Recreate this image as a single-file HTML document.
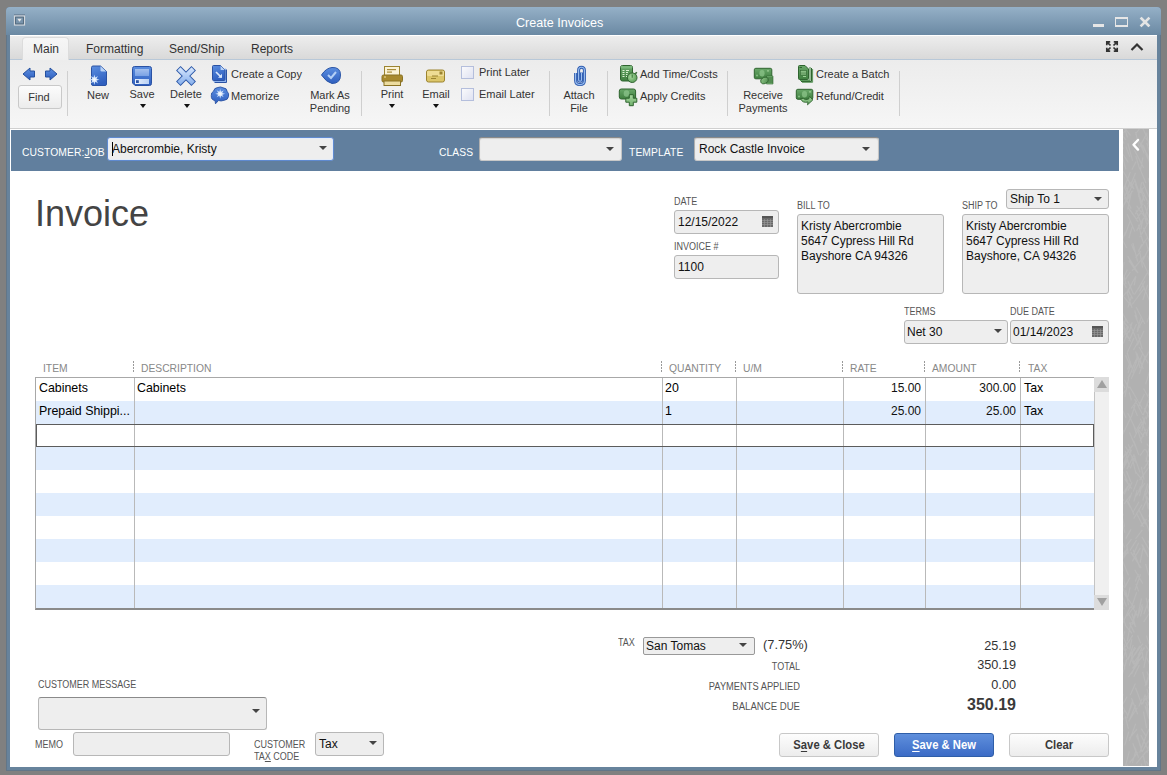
<!DOCTYPE html>
<html><head><meta charset="utf-8">
<style>
*{box-sizing:border-box;margin:0;padding:0}
html,body{width:1167px;height:775px;overflow:hidden;background:#808080;font-family:"Liberation Sans",sans-serif;color:#333}
.a{position:absolute}
#win{position:absolute;left:6px;top:7px;width:1155px;height:764px;background:#67839c;border-radius:4px 4px 0 0;box-shadow:inset 1px 0 0 #627688,inset -1px 0 0 #627688,inset 0 -1px 0 #627688}
#title{position:absolute;left:6px;top:7px;width:1155px;height:28px;border-radius:4px 4px 0 0;background:linear-gradient(#95b0c7,#6b89a3)}
#content{position:absolute;left:10px;top:35px;width:1147px;height:732px;background:#fff}
.t{position:absolute;white-space:nowrap;line-height:1}
.tab{font-size:12px;color:#333}
#tabbar{position:absolute;left:10px;top:35px;width:1147px;height:25px;background:linear-gradient(#ededed,#d9d9d9);border-top:1px solid #fff;border-bottom:1px solid #b8c8d8}
#toolbar{position:absolute;left:10px;top:60px;width:1147px;height:69px;background:linear-gradient(#ececec,#f6f6f6);border-bottom:1px solid #d0d0d0}
.tb{font-size:12px;color:#333}
.sep{position:absolute;width:1px;background:#cfcfcf}
.lbl{font-size:10px;color:#555;transform:scaleX(.9);transform-origin:0 0}
.lr{transform-origin:100% 0}
.fld{position:absolute;background:#eeeeee;border:1px solid #b7b7b7;border-radius:3px}
.v{font-size:12px;color:#111}
.c{font-size:12.4px;color:#000}
.dd{position:absolute;width:0;height:0;border-left:4px solid transparent;border-right:4px solid transparent;border-top:4px solid #444}
.hdr{font-size:10.3px;color:#888}
.hsep{position:absolute;width:1px;height:11px;background:repeating-linear-gradient(#9a9a9a 0 2px,transparent 2px 3px)}
</style></head><body>
<div id="win"></div>
<div id="title"></div>
<div id="content"></div>
<!-- title bar -->
<svg class="a" style="left:13px;top:14px" width="13" height="12"><rect x="1" y="0.5" width="11" height="1" fill="#5a6f82"/><rect x="1.5" y="2" width="10" height="9" fill="none" stroke="#d4d8dc" stroke-width="1.2"/><rect x="2.6" y="3.1" width="7.8" height="6.8" fill="#7893ab" stroke="#4d6274" stroke-width="0.8"/><path d="M4.3 4.8 L8.7 4.8 L6.5 7.8 Z" fill="#e8e8e8"/></svg>
<div class="t" style="left:516px;top:15.6px;font-size:13.5px;color:#fff;transform:scaleX(.93);transform-origin:0 0">Create Invoices</div>
<div class="a" style="left:1093px;top:24px;width:11px;height:3px;background:#e6e6e6"></div>
<div class="a" style="left:1115px;top:17px;width:13px;height:10px;border:2px solid #e6e6e6;border-left-width:1.5px;border-right-width:1.5px"></div>
<svg class="a" style="left:1139px;top:16px" width="12" height="12"><path d="M2.5 2.5 L9.5 9.5 M9.5 2.5 L2.5 9.5" stroke="#e4e4e4" stroke-width="2.6" stroke-linecap="square"/></svg>

<div id="tabbar"></div>
<div class="a" style="left:22px;top:37px;width:47px;height:23px;background:linear-gradient(#f6f6f6,#efefef);border:1px solid #dcdcdc;border-bottom:none;border-radius:4px 4px 0 0"></div>
<div class="t tab" style="left:33px;top:43px">Main</div>
<div class="t tab" style="left:86px;top:43px">Formatting</div>
<div class="t tab" style="left:169px;top:43px">Send/Ship</div>
<div class="t tab" style="left:251px;top:43px">Reports</div>

<div id="toolbar"></div>

<!-- customer bar -->
<div class="a" style="left:11px;top:130px;width:1108px;height:41px;background:#617f9e"></div>
<div class="t" style="left:22px;top:148px;font-size:10.3px;letter-spacing:.1px;color:#fff">CUSTOMER:<u style="text-decoration-thickness:1px;text-underline-offset:1px">J</u>OB</div>
<div class="fld" style="left:107px;top:137px;width:227px;height:24px;border:1px solid #5f8ad0;box-shadow:inset 0 0 0 1px #e4ecf8"></div>
<div class="a" style="left:112px;top:142px;width:1px;height:14px;background:#000"></div>
<div class="t v" style="left:112px;top:143px">Abercrombie, Kristy</div>
<div class="t" style="left:439px;top:148px;font-size:10.3px;letter-spacing:.1px;color:#fff">CLASS</div>
<div class="fld" style="left:479px;top:137px;width:143px;height:24px;border-color:#8a8a8a #c4c4c4 #c8c8c8 #b0b0b0;box-shadow:inset 0 1px 1px rgba(0,0,0,.12)"></div>
<div class="t" style="left:629px;top:148px;font-size:10.3px;letter-spacing:.1px;color:#fff">TEMPLATE</div>
<div class="fld" style="left:694px;top:137px;width:185px;height:24px;border-color:#8a8a8a #c4c4c4 #c8c8c8 #b0b0b0;box-shadow:inset 0 1px 1px rgba(0,0,0,.12)"></div>
<div class="t v" style="left:699px;top:143px">Rock Castle Invoice</div>

<div class="t" style="left:35px;top:196px;font-size:36px;color:#444">Invoice</div>

<!-- header fields -->
<div class="t lbl" style="left:674px;top:197px">DATE</div>
<div class="fld" style="left:674px;top:210px;width:105px;height:24px"></div>
<div class="t v" style="left:678px;top:216px">12/15/2022</div>
<svg class="a" style="left:762px;top:216px" width="11" height="11"><rect x="0" y="0" width="11" height="11" fill="#6a6a6a"/><rect x="0" y="0" width="11" height="2" fill="#555"/><path d="M0 4.5 H11 M0 6.5 H11 M0 8.5 H11 M2.5 3 V11 M5.5 3 V11 M8.5 3 V11" stroke="#9a9a9a" stroke-width="0.6"/></svg>
<div class="t lbl" style="left:674px;top:242px">INVOICE #</div>
<div class="fld" style="left:674px;top:255px;width:105px;height:24px"></div>
<div class="t v" style="left:678px;top:261px">1100</div>
<div class="t lbl" style="left:797px;top:201px">BILL TO</div>
<div class="fld" style="left:797px;top:214px;width:147px;height:80px"></div>
<div class="t v" style="left:801px;top:219px;line-height:15px">Kristy Abercrombie<br>5647 Cypress Hill Rd<br>Bayshore CA 94326</div>
<div class="t lbl" style="left:962px;top:201px">SHIP TO</div>
<div class="fld" style="left:1006px;top:189px;width:103px;height:20px"></div>
<div class="t v" style="left:1010px;top:193px">Ship To 1</div>
<div class="dd" style="left:1094px;top:197px"></div>
<div class="fld" style="left:962px;top:214px;width:147px;height:80px"></div>
<div class="t v" style="left:966px;top:219px;line-height:15px">Kristy Abercrombie<br>5647 Cypress Hill Rd<br>Bayshore, CA 94326</div>
<div class="t lbl" style="left:904px;top:307px">TERMS</div>
<div class="fld" style="left:904px;top:320px;width:104px;height:24px"></div>
<div class="t v" style="left:907px;top:326px">Net 30</div>
<div class="dd" style="left:994px;top:329px"></div>
<div class="t lbl" style="left:1010px;top:307px">DUE DATE</div>
<div class="fld" style="left:1010px;top:320px;width:99px;height:24px"></div>
<div class="t v" style="left:1013px;top:326px">01/14/2023</div>
<svg class="a" style="left:1092px;top:326px" width="11" height="11"><rect x="0" y="0" width="11" height="11" fill="#6a6a6a"/><rect x="0" y="0" width="11" height="2" fill="#555"/><path d="M0 4.5 H11 M0 6.5 H11 M0 8.5 H11 M2.5 3 V11 M5.5 3 V11 M8.5 3 V11" stroke="#9a9a9a" stroke-width="0.6"/></svg>
<!-- table -->
<div class="t hdr" style="left:43px;top:364px">ITEM</div><div class="t hdr" style="left:141px;top:364px">DESCRIPTION</div><div class="t hdr" style="left:669px;top:364px">QUANTITY</div><div class="t hdr" style="left:743px;top:364px">U/M</div><div class="t hdr" style="left:850px;top:364px">RATE</div><div class="t hdr" style="left:932px;top:364px">AMOUNT</div><div class="t hdr" style="left:1028px;top:364px">TAX</div>
<div class="hsep" style="left:133px;top:361px"></div><div class="hsep" style="left:661px;top:361px"></div><div class="hsep" style="left:735px;top:361px"></div><div class="hsep" style="left:842px;top:361px"></div><div class="hsep" style="left:924px;top:361px"></div><div class="hsep" style="left:1019px;top:361px"></div>
<div class="a" style="left:35px;top:377px;width:1060px;height:233px;border-top:1px solid #a8a8a8;border-left:1px solid #a8a8a8;border-bottom:2px solid #8a8a8a"></div>
<div class="a" style="left:36px;top:378px;width:1058px;height:23px;background:#ffffff"></div><div class="a" style="left:36px;top:401px;width:1058px;height:23px;background:#e1edfd"></div><div class="a" style="left:36px;top:424px;width:1058px;height:23px;background:#ffffff"></div><div class="a" style="left:36px;top:447px;width:1058px;height:23px;background:#e1edfd"></div><div class="a" style="left:36px;top:470px;width:1058px;height:23px;background:#ffffff"></div><div class="a" style="left:36px;top:493px;width:1058px;height:23px;background:#e1edfd"></div><div class="a" style="left:36px;top:516px;width:1058px;height:23px;background:#ffffff"></div><div class="a" style="left:36px;top:539px;width:1058px;height:23px;background:#e1edfd"></div><div class="a" style="left:36px;top:562px;width:1058px;height:23px;background:#ffffff"></div><div class="a" style="left:36px;top:585px;width:1058px;height:23px;background:#e1edfd"></div>
<div class="a" style="left:134px;top:378px;width:1px;height:230px;background:#b9b9b9"></div><div class="a" style="left:662px;top:378px;width:1px;height:230px;background:#b9b9b9"></div><div class="a" style="left:736px;top:378px;width:1px;height:230px;background:#b9b9b9"></div><div class="a" style="left:843px;top:378px;width:1px;height:230px;background:#b9b9b9"></div><div class="a" style="left:925px;top:378px;width:1px;height:230px;background:#b9b9b9"></div><div class="a" style="left:1020px;top:378px;width:1px;height:230px;background:#b9b9b9"></div>
<div class="a" style="left:36px;top:424px;width:1058px;height:23px;border:1px solid #5c5c5c"></div>
<div class="t c" style="left:39px;top:382px">Cabinets</div>
<div class="t c" style="left:137px;top:382px">Cabinets</div>
<div class="t c" style="left:665px;top:382px">20</div>
<div class="t v" style="left:821px;top:382px;width:100px;text-align:right">15.00</div>
<div class="t v" style="left:916px;top:382px;width:100px;text-align:right">300.00</div>
<div class="t c" style="left:1024px;top:382px">Tax</div>
<div class="t c" style="left:39px;top:405px">Prepaid Shippi...</div>
<div class="t c" style="left:665px;top:405px">1</div>
<div class="t v" style="left:821px;top:405px;width:100px;text-align:right">25.00</div>
<div class="t v" style="left:916px;top:405px;width:100px;text-align:right">25.00</div>
<div class="t c" style="left:1024px;top:405px">Tax</div>
<div class="a" style="left:1094px;top:377px;width:15px;height:233px;background:#f0f0f0;border-left:1px solid #c4c4c4"></div>
<div class="a" style="left:1094px;top:377px;width:15px;height:15px;background:#dcdcdc"></div>
<div class="a" style="left:1097px;top:380px;width:0;height:0;border-left:5px solid transparent;border-right:5px solid transparent;border-bottom:8px solid #a0a0a0"></div>
<div class="a" style="left:1094px;top:595px;width:15px;height:15px;background:#dcdcdc"></div>
<div class="a" style="left:1097px;top:598px;width:0;height:0;border-left:5px solid transparent;border-right:5px solid transparent;border-top:8px solid #a0a0a0"></div>

<!-- totals -->
<div class="t lbl" style="left:618px;top:638px">TAX</div>
<div class="a" style="left:643px;top:637px;width:112px;height:18px;background:#eee;border:1px solid #999;border-radius:2px"></div>
<div class="t v" style="left:646px;top:640px">San Tomas</div>
<div class="dd" style="left:739px;top:643px"></div>
<div class="t v" style="left:763px;top:639px;color:#333;font-size:12.8px">(7.75%)</div>
<div class="t v" style="left:916px;top:640px;width:100px;text-align:right;color:#333;font-size:12.7px">25.19</div>
<div class="t lbl lr" style="left:650px;top:662px;width:150px;text-align:right">TOTAL</div>
<div class="t v" style="left:916px;top:659px;width:100px;text-align:right;color:#333;font-size:12.7px">350.19</div>
<div class="t lbl lr" style="left:650px;top:682px;width:150px;text-align:right;transform:scaleX(.93)">PAYMENTS APPLIED</div>
<div class="t v" style="left:916px;top:679px;width:100px;text-align:right;color:#333;font-size:12.7px">0.00</div>
<div class="t lbl lr" style="left:650px;top:702px;width:150px;text-align:right;transform:scaleX(.96)">BALANCE DUE</div>
<div class="t" style="left:901px;top:697px;width:115px;text-align:right;font-size:16px;font-weight:bold;color:#3a3a3a">350.19</div>

<!-- bottom left -->
<div class="t lbl" style="left:38px;top:680px">CUSTOMER MESSAGE</div>
<div class="fld" style="left:38px;top:697px;width:229px;height:33px;border-top-color:#8a8a8a"></div>
<div class="dd" style="left:252px;top:709px"></div>
<div class="t lbl" style="left:35px;top:740px">MEMO</div>
<div class="fld" style="left:73px;top:732px;width:157px;height:24px"></div>
<div class="t lbl" style="left:254px;top:739px;line-height:11.5px">CUSTOMER<br>TA<u style="text-underline-offset:1px">X</u> CODE</div>
<div class="fld" style="left:315px;top:732px;width:69px;height:24px"></div>
<div class="t v" style="left:319px;top:738px">Tax</div>
<div class="dd" style="left:369px;top:741px"></div>

<!-- buttons -->
<div class="a" style="left:779px;top:733px;width:100px;height:24px;border:1px solid #c8c8c8;border-radius:3px;background:linear-gradient(#fdfdfd,#ececec)"></div>
<div class="t" style="left:779px;top:738.5px;width:100px;text-align:center;font-size:12.5px;font-weight:bold;color:#3a3a3a;transform:scaleX(.9)">S<u style="text-underline-offset:2px">a</u>ve &amp; Close</div>
<div class="a" style="left:894px;top:733px;width:100px;height:24px;border:1px solid #2f5ea8;border-radius:3px;background:linear-gradient(#5f8fdc,#3b6bc6)"></div>
<div class="t" style="left:894px;top:738.5px;width:100px;text-align:center;font-size:12.5px;font-weight:bold;color:#fff;transform:scaleX(.9)"><u style="text-underline-offset:2px">S</u>ave &amp; New</div>
<div class="a" style="left:1009px;top:733px;width:100px;height:24px;border:1px solid #c8c8c8;border-radius:3px;background:linear-gradient(#fdfdfd,#ececec)"></div>
<div class="t" style="left:1009px;top:738.5px;width:100px;text-align:center;font-size:12.5px;font-weight:bold;color:#3a3a3a;transform:scaleX(.9)">Clear</div>

<!-- sidebar -->
<svg class="a" style="left:1123px;top:129px" width="26" height="637"><rect width="26" height="637" fill="#b1b1b1"/><path d="M4.3 85.3L11.9 102.6M0.2 42.2L9.7 59.0M16.0 372.7L10.3 382.7M-2.5 63.3L-9.7 73.5M12.8 26.8L16.6 39.8M27.1 225.5L30.6 239.3M25.3 470.1L29.8 478.8M10.6 11.1L14.4 22.5M5.3 315.3L8.3 323.5M18.7 415.3L22.1 422.9M9.5 96.8L5.9 109.0M26.8 315.2L22.8 333.1M2.6 261.2L-3.3 269.0M17.0 -7.0L23.3 7.0M4.1 68.5L-3.8 85.5M21.6 566.6L19.8 575.1M-5.4 123.8L-11.2 137.1M28.1 393.1L33.9 407.2M10.0 61.7L4.2 68.8M5.0 161.1L9.8 169.6M12.6 3.0L15.8 16.9M26.5 221.5L18.1 237.1M23.1 477.0L33.0 491.5M9.9 113.8L14.6 132.7M5.9 131.6L13.6 143.0M16.8 516.8L9.6 528.5M-1.2 509.8L-6.4 525.9M-4.8 90.6L-8.9 105.4M14.6 300.4L18.7 314.2M27.5 273.5L33.6 286.1M21.0 201.8L14.3 216.3M23.0 328.6L29.1 346.1M21.5 389.7L26.7 403.4M4.4 329.7L-1.5 338.2M-6.4 50.0L-3.2 65.0M11.2 325.6L3.9 340.3M25.3 611.6L19.0 622.9M6.9 195.1L14.3 212.4M-2.1 461.2L-7.5 477.3M-4.4 573.5L-9.4 584.5M-0.6 196.8L4.2 208.5M11.7 181.5L14.1 190.1M2.3 587.4L5.4 599.9M12.4 327.3L7.2 339.4M-5.2 609.0L-0.7 619.2M-3.4 -7.3L0.4 6.5M1.1 57.8L7.4 70.7M-0.2 281.4L3.0 288.9M19.9 351.4L16.5 367.0M12.7 576.0L5.8 592.6M18.9 407.9L26.6 421.4M25.4 271.4L31.2 285.5M18.3 15.1L28.1 32.1M12.8 147.6L11.2 156.4M2.6 421.3L-4.6 431.8M-6.4 -0.0L-12.1 14.8M19.2 569.6L15.9 577.4M23.7 578.1L31.1 594.5M14.2 578.7L5.8 592.0M28.5 235.5L24.6 248.8M-7.9 515.5L-1.7 531.3M10.0 523.1L6.5 536.6M6.5 303.5L12.5 317.5M4.6 418.3L0.8 428.8M17.5 445.3L11.9 461.5M29.7 350.1L39.3 365.2M28.8 283.9L34.1 292.0M11.9 618.6L15.6 628.7M26.1 308.3L31.9 324.0M7.8 235.1L5.1 244.1M27.2 459.2L30.9 470.9M8.3 168.0L5.0 178.5M2.1 324.8L-6.7 341.6M27.7 350.2L23.3 365.3M2.9 17.6L6.8 27.9M20.1 419.1L25.1 427.8M-1.9 123.2L-8.0 134.8M12.8 147.3L3.8 163.6M20.5 259.5L27.4 271.6M13.8 224.5L18.2 234.9M1.4 250.8L6.0 259.2M8.2 492.9L4.2 512.1M1.4 57.5L-2.9 65.4M21.5 -14.1L13.9 -0.6M12.1 275.9L8.3 288.0M0.5 384.7L-4.8 397.4M0.9 149.3L-2.5 167.6M16.6 38.9L23.0 54.3M5.8 248.6L1.9 267.8M3.8 530.3L-0.4 545.0M26.1 307.6L29.2 317.6M29.0 79.4L35.3 94.9M29.9 604.5L36.1 614.5M19.6 543.0L22.8 554.8M28.3 67.3L24.3 75.4M18.8 115.2L15.3 122.7M7.6 524.9L11.6 535.2M20.4 582.5L23.6 599.2M18.2 599.6L22.7 606.6M0.9 301.0L-3.7 318.2M-3.0 315.2L-12.4 327.2M4.5 197.5L-1.8 206.5M-5.5 7.5L-0.6 17.6M-4.8 49.1L-8.2 62.2M25.9 141.2L28.8 152.4M13.5 233.0L9.7 243.7M26.5 110.2L36.3 122.6M29.7 53.1L38.4 69.4M0.8 18.5L-7.0 29.4M1.9 502.2L-0.7 510.3M4.9 14.4L9.5 31.6M7.5 232.3L4.6 240.5M-4.1 247.9L2.0 259.3M2.8 189.6L0.3 197.4M21.1 518.5L12.1 535.0M8.1 530.5L12.4 538.0M-2.6 521.3L-7.4 529.8M2.8 331.6L-0.8 342.6M23.8 13.9L29.4 31.9M15.6 533.3L5.4 548.1M-1.0 130.1L-10.3 147.4M23.0 113.1L25.7 122.1M14.8 350.8L10.1 362.6M6.0 319.9L0.3 336.1M21.6 289.8L18.9 301.8M22.5 320.4L30.5 335.8M11.4 21.1L20.6 38.8M19.8 527.0L9.5 539.5M19.4 132.0L27.4 149.1M9.3 154.0L4.0 164.6M-6.6 106.1L-17.5 119.8M2.0 495.9L9.0 504.5M12.4 554.6L7.3 565.9M21.1 279.1L26.7 289.4M28.7 563.7L22.8 571.5M15.4 272.4L19.2 279.8M-7.9 221.1L-12.1 230.6M15.7 300.8L20.9 307.8M-2.5 427.5L0.3 442.4M14.0 385.3L20.5 398.1M7.4 143.0L1.9 151.1M-0.4 389.4L1.7 397.9M15.8 646.1L10.7 662.2M9.7 478.3L14.2 486.6M25.9 600.2L19.6 615.2M26.9 631.3L32.3 639.8M26.4 544.7L23.5 556.3M1.1 588.5L-5.7 600.4M12.2 -10.8L4.2 -0.9M14.2 360.9L10.9 372.5M-2.6 4.1L2.9 10.9M14.4 226.7L12.6 235.8M-0.2 59.5L3.1 72.8M-3.0 511.7L1.4 521.8M2.7 461.0L5.6 476.1M-6.8 259.6L-16.2 273.3M23.5 367.1L27.8 373.8M10.7 311.8L15.8 325.9M-2.0 527.1L2.0 540.4M29.7 358.2L37.6 368.6M16.5 232.3L8.2 249.8M-3.2 380.1L-12.4 396.0M9.1 353.2L4.9 361.7M9.6 573.6L3.9 589.3M29.0 465.9L37.5 483.7M19.7 52.7L26.1 68.2M8.5 115.5L11.8 122.9M24.5 275.3L30.7 289.2M7.4 477.7L-0.3 494.2M17.4 418.9L9.3 432.4M9.2 193.2L6.0 203.6M8.1 287.7L0.1 304.7M4.5 -7.9L-1.6 -0.1M21.7 610.5L16.7 623.7M16.3 536.3L10.9 547.8M21.0 66.4L18.6 74.8M-5.1 593.8L0.2 609.8M27.7 335.5L16.7 351.2M-5.4 515.9L-11.7 526.4M16.3 529.5L8.5 545.0M9.8 506.1L2.4 517.7M22.6 516.3L30.8 529.9M5.8 602.6L1.7 616.4M5.1 372.3L11.1 386.0M24.5 108.5L15.8 121.1M18.1 634.8L21.5 644.6M18.3 338.0L21.1 350.7M23.4 299.7L17.1 312.1M12.5 558.8L18.9 575.7M6.2 263.5L8.5 271.4M-6.3 474.8L-11.1 481.7M19.3 400.8L12.5 410.0M5.0 152.3L10.5 165.2M2.3 321.8L6.4 337.8M-3.2 631.9L-8.4 645.4M-6.1 184.8L5.1 198.2M26.6 391.8L31.0 401.4M17.3 289.5L24.1 307.2M16.9 230.3L20.2 240.0M-6.7 -1.4L1.1 14.7M21.4 265.0L15.6 277.4M7.7 52.9L11.0 60.3M17.4 641.1L25.1 655.9M1.2 472.8L-3.5 488.9M-4.8 403.0L1.5 418.4M-7.6 -5.2L-18.9 10.7M23.7 390.0L17.6 397.5M22.3 226.6L16.4 245.0M21.8 361.9L25.2 380.1M19.6 -4.7L12.3 5.5M18.0 385.2L22.6 395.4M-2.0 597.2L-8.4 606.5M24.3 521.7L20.8 538.9M-0.4 483.9L-7.0 499.0M27.2 374.9L32.9 391.3M0.8 370.4L-5.3 378.6M-0.7 105.2L-5.2 115.2M27.1 313.0L32.4 327.2M5.1 330.4L-1.8 343.8M0.1 600.5L-3.2 611.0M-6.6 118.7L-11.6 131.6M24.1 580.0L27.6 590.6M13.5 411.0L6.9 421.6M0.9 464.3L11.5 478.9M-6.2 507.9L-12.3 518.0M-7.8 117.3L-12.4 128.2M1.8 67.6L8.2 79.6M26.7 516.2L35.6 532.6M-2.7 282.4L-10.2 300.6M4.3 140.5L-2.5 155.6M13.0 81.2L18.5 95.0M3.3 519.8L-2.7 538.6M-5.8 580.2L0.1 596.2M28.9 272.3L23.2 290.2M-5.8 468.1L1.2 480.4M8.8 510.1L6.8 520.5M13.7 76.8L24.1 91.4M25.8 471.0L20.8 485.2M-0.3 28.7L2.9 40.3M24.0 559.9L26.2 570.6M13.4 640.5L17.9 654.0M8.9 327.9L13.0 344.7M25.0 368.2L19.1 381.1M12.2 342.3L19.6 351.4M13.1 620.3L9.4 634.1M18.7 53.4L15.5 68.1M20.9 58.2L15.0 66.0M13.8 481.5L9.1 495.9M14.9 9.1L21.3 24.4M24.0 360.3L29.4 373.5M28.4 606.3L24.6 614.3M8.5 320.7L1.7 334.8M22.8 573.1L27.3 588.0M22.6 8.8L29.6 17.9M3.6 415.6L5.3 424.5M14.4 604.7L16.8 615.8M20.0 477.4L17.4 487.5M19.0 291.5L12.9 301.8M-0.8 348.0L-5.8 358.8M4.4 164.5L9.1 179.0M5.2 422.4L-6.4 438.5M17.8 606.1L25.9 622.0M11.7 476.3L4.4 487.0M-4.1 257.9L-8.1 270.3M21.8 565.4L25.9 576.1M6.8 354.3L1.1 365.5M3.4 342.0L7.9 353.0M24.0 542.4L26.3 550.4M1.7 580.8L-3.7 593.9M11.7 440.7L19.8 454.6M12.0 50.8L3.7 68.5M10.5 277.7L14.6 286.9M4.1 635.7L12.4 651.4M29.6 575.6L25.4 587.9M-5.7 360.7L-9.1 368.1M-7.9 457.6L-0.8 471.9M-0.5 316.1L-6.0 329.9M7.6 65.8L-3.2 81.9M10.6 295.9L13.5 305.2M1.1 168.2L8.8 177.6M9.1 241.5L4.9 249.0M1.1 133.2L-1.0 144.7M14.9 623.4L6.8 633.5M7.1 458.3L4.8 468.3M28.9 178.3L24.1 193.4M28.5 265.8L32.6 275.9M-6.7 426.7L-2.7 440.7M21.9 354.1L12.4 367.7M6.3 622.3L2.3 637.9M27.8 648.6L22.4 662.9M0.1 565.1L-2.1 573.2M19.3 81.5L12.9 91.4M17.2 57.5L24.5 72.4M-4.7 176.9L-12.5 192.3M25.5 557.8L34.8 574.1M-7.0 453.0L-2.2 462.0M-3.6 591.9L-10.8 603.0M20.8 88.9L13.6 101.9M19.2 154.4L26.6 171.7M25.3 374.1L28.2 384.2M26.8 483.4L20.7 493.0M-4.6 614.3L-10.5 627.1M17.7 122.0L12.7 128.9M18.7 520.8L20.7 531.6M-5.7 223.0L-9.3 238.6M1.0 145.7L2.9 155.2M18.9 375.7L10.7 389.6M-2.1 636.2L1.9 647.9M-0.2 25.1L5.3 33.5M8.9 363.5L5.9 372.0M19.3 636.8L14.0 653.4M4.2 223.9L9.1 239.0M-5.0 482.1L-8.9 490.4M19.3 191.4L14.2 202.7M12.9 230.6L6.1 248.1M27.9 313.8L32.4 322.4M0.6 77.0L-4.0 86.1M19.5 -13.1L21.7 -4.5M-5.9 457.7L-11.3 475.7M-1.8 181.7L5.3 194.4M11.6 269.9L19.6 285.7M-5.7 434.8L-13.4 448.7M-2.8 560.4L-6.9 576.2M-2.4 370.1L-5.7 382.4M-3.7 105.0L3.7 119.0M-0.9 430.7L5.5 446.3M26.6 362.0L31.5 376.7M28.5 327.6L20.6 340.1M21.4 76.0L27.2 91.3M28.3 290.7L23.7 304.7M26.9 564.1L37.3 578.6M-3.3 233.1L-0.9 241.9M12.9 519.0L2.8 531.9M-7.2 642.5L-3.7 652.1M13.1 177.9L21.9 195.1M-7.5 212.7L-2.2 219.9M15.6 413.7L10.4 425.4M25.2 391.2L31.7 399.5M23.1 468.6L26.0 483.3M4.7 -1.4L-2.5 7.3M2.4 317.5L12.8 333.3M26.3 48.3L31.9 64.9M1.0 514.8L3.7 528.7M16.1 218.0L25.1 234.3M21.7 320.0L17.1 326.6M25.1 286.3L29.8 294.8M19.4 152.7L11.5 165.5M-5.0 103.9L-12.1 118.9M27.0 542.7L21.9 557.3M1.0 -1.7L7.5 6.4M19.9 625.5L23.9 641.6M-7.8 165.0L-3.0 175.9M20.5 416.5L17.1 433.8M-4.7 392.5L-1.8 400.3M4.0 420.0L0.1 428.2M-2.1 79.9L-6.8 95.0M14.9 205.0L19.2 220.2M12.9 454.7L15.6 462.4M10.1 420.8L16.9 438.8M15.7 66.3L19.9 82.6M26.3 564.1L18.8 575.1M24.7 126.7L27.4 135.6M19.9 28.5L17.4 41.2M26.9 613.4L24.1 623.9M5.5 201.8L0.3 214.6M27.5 496.5L31.3 509.8M25.9 92.5L16.8 108.2M19.9 15.7L25.8 30.8M22.6 86.0L26.3 94.4M-1.6 439.0L2.4 458.4M-6.7 141.0L-14.7 153.6M18.5 469.5L14.4 488.7M12.0 -13.3L20.1 -1.4M23.9 621.6L13.3 634.6M2.4 102.9L-3.7 119.3M28.2 162.7L34.0 177.9M29.3 566.3L24.0 577.7M6.6 257.6L14.8 271.8M19.7 644.0L26.0 661.9M-6.1 446.6L1.1 458.3M16.6 298.0L11.1 308.9M-5.6 634.0L-15.5 650.3M21.1 159.4L9.2 175.5M-5.5 488.6L-8.9 497.8M17.1 103.2L20.8 115.2M23.6 528.8L30.4 543.3M11.9 186.1L17.2 198.4M10.2 515.9L5.2 530.5M11.9 518.0L6.2 528.3M12.7 594.8L6.3 611.9M-0.3 266.4L-2.7 278.7M-6.4 485.8L-11.9 497.2M14.0 600.0L6.4 609.3M-5.3 487.8L-0.6 495.8M13.4 606.8L18.5 619.1M10.7 325.3L17.0 343.4M3.2 204.6L7.8 212.5M-4.6 486.0L-12.2 502.7M12.9 482.4L9.2 493.6M-0.8 638.2L-3.0 649.0M24.6 354.5L19.8 371.5M24.6 156.0L19.8 171.1M19.0 79.0L23.8 95.0M-7.7 30.0L-10.5 41.1M19.0 518.6L15.1 526.4M8.5 410.1L3.6 416.7M19.4 475.2L14.4 488.7M-2.0 502.1L5.3 520.1M7.8 423.2L18.3 439.1M-2.9 91.5L-9.5 101.2M1.8 349.9L8.6 359.7M-2.1 178.6L-9.1 189.7M17.8 61.1L21.6 71.9M5.2 484.0L12.4 497.4M12.5 43.8L7.0 57.7M3.4 370.8L7.2 378.5M4.7 284.0L12.5 299.9M19.5 287.6L22.6 295.4M11.5 49.7L16.8 65.5M19.9 224.0L15.4 234.7M1.9 55.8L7.6 68.2M-1.8 341.1L-9.9 359.2M26.5 468.2L32.7 480.6M22.1 364.3L27.2 383.6M8.1 400.1L2.8 409.6M14.6 506.4L17.8 514.2M15.5 445.1L12.2 452.5M27.7 259.0L24.8 268.3M5.1 78.3L15.1 92.7M10.2 315.7L-1.0 330.3M-6.1 228.1L-12.0 243.1M20.3 74.7L12.1 85.1M23.4 506.6L26.1 515.0M21.8 518.5L10.8 533.5M13.9 605.6L19.0 622.8M7.4 42.9L0.9 59.2M-7.8 310.2L-4.6 323.3M4.7 127.1L15.0 144.1M-0.9 576.6L5.3 587.4M26.1 244.1L22.6 255.3M4.1 567.7L-2.9 580.2M-8.0 101.6L-4.1 117.3M29.4 473.5L36.7 487.7M-5.1 400.0L-12.7 417.7M22.7 24.7L28.6 38.1M9.0 484.5L12.6 497.8M-7.7 607.8L-11.2 617.3M14.4 638.1L11.5 653.6M22.6 434.9L25.8 446.3M23.7 314.7L29.9 322.4M20.1 98.5L28.0 116.3M-0.9 190.8L3.7 206.3M5.7 197.6L-0.9 209.9M7.5 91.3L1.5 107.2M2.5 226.2L8.0 238.4M-7.6 338.9L-14.7 356.1M25.3 49.1L27.6 58.8M-1.3 465.7L3.5 477.6M11.0 209.0L4.3 223.6M26.3 73.8L22.0 88.1M7.3 366.5L1.1 375.1M24.3 143.7L15.2 159.9M-3.0 453.2L3.3 467.1M26.3 190.7L34.8 204.7M-5.3 542.7L-1.1 556.1M29.1 377.5L25.6 387.6M15.9 211.2L10.4 221.1M29.0 369.1L34.9 380.8M-5.6 404.0L-9.3 414.0M25.0 647.1L30.3 661.9M13.9 271.8L8.2 279.3M-1.7 490.1L-12.2 503.8M-0.4 487.4L2.5 495.7M-0.2 -6.3L4.5 8.5M13.5 194.9L5.9 212.1M22.6 287.6L16.6 300.1M-4.9 209.5L-2.3 223.4M-0.0 152.5L-8.4 167.7M19.6 92.0L17.8 100.2M22.9 632.2L34.1 646.6M4.9 357.1L-5.8 372.7M6.5 54.2L0.9 70.4M13.7 463.3L8.2 478.9M9.8 570.6L4.4 587.4M25.8 -11.7L30.5 -1.9M26.5 118.1L18.7 133.6M-6.3 354.9L-12.0 371.0M-4.1 632.1L-1.8 641.1M21.9 576.6L26.0 590.0M15.6 380.4L22.1 392.2M17.5 357.3L14.3 366.2M16.7 122.7L19.6 138.6M-4.7 143.9L3.4 159.0M-2.4 388.3L2.0 403.9M21.2 127.2L9.1 141.9M19.8 514.7L9.2 529.4M8.4 569.0L14.7 585.2M24.2 3.9L15.9 18.9M23.8 646.2L28.2 657.5M12.7 222.3L17.1 239.2M12.2 54.7L18.7 73.2M-1.9 338.1L4.5 352.5M0.3 487.1L-8.0 500.0M15.3 95.7L17.9 104.4M24.9 411.4L31.2 425.2M18.4 187.1L14.2 201.2M19.5 416.2L24.5 426.0M7.0 448.4L1.5 459.1M23.6 5.4L26.2 16.5M-7.6 111.3L-4.7 121.0M-2.5 49.6L-6.2 57.5M3.2 163.4L-2.8 171.0M21.9 152.3L16.6 162.4M6.5 493.6L11.2 503.4M25.9 159.8L29.1 167.6M8.7 62.0L4.6 80.7M26.6 268.2L20.1 286.3M13.1 32.6L8.8 40.8M27.9 334.0L35.5 345.4M9.8 614.2L13.4 624.0" stroke="#b8b8b8" stroke-width="1.2" fill="none"/></svg>
<svg class="a" style="left:1129px;top:136px" width="14" height="18"><path d="M9 4 L4.5 8.8 L9 13.6" stroke="#fff" stroke-width="2.4" fill="none" stroke-linecap="round" stroke-linejoin="round"/></svg>
<!-- toolbar content -->
<svg class="a" style="left:22px;top:67px" width="14" height="14"><defs><linearGradient id="ga" x1="0" y1="0" x2="0" y2="1"><stop offset="0" stop-color="#5b8ee0"/><stop offset="1" stop-color="#2f5fbf"/></linearGradient></defs><path d="M1 7 L8 1 L8 4 L12.5 4 L12.5 10 L8 10 L8 13 Z" fill="url(#ga)" stroke="#24509e" stroke-width="1" stroke-linejoin="round"/></svg>
<svg class="a" style="left:44px;top:67px" width="14" height="14"><path d="M13 7 L6 1 L6 4 L1.5 4 L1.5 10 L6 10 L6 13 Z" fill="url(#ga)" stroke="#24509e" stroke-width="1" stroke-linejoin="round"/></svg>
<div class="a" style="left:18px;top:85px;width:44px;height:24px;border:1px solid #c9c9c9;border-radius:3px;background:linear-gradient(#fcfcfc,#ececec)"></div>
<div class="t" style="left:17px;top:92px;width:44px;text-align:center;font-size:11px;color:#333">Find</div>
<div class="sep" style="left:67px;top:71px;height:45px"></div>

<svg class="a" style="left:89px;top:65px" width="20" height="22">
<defs><linearGradient id="gn" x1="0" y1="0" x2="0.3" y2="1"><stop offset="0" stop-color="#5b8ee0"/><stop offset="1" stop-color="#2f5fbf"/></linearGradient>
<radialGradient id="gs"><stop offset="0" stop-color="#ffffff"/><stop offset="1" stop-color="#a8c8f4"/></radialGradient></defs>
<path d="M2.5 2.5 Q2.5 1 4 1 L11.5 1 L17.5 6.5 L17.5 19 Q17.5 20.5 16 20.5 L4 20.5 Q2.5 20.5 2.5 19 Z" fill="url(#gn)" stroke="#2a52a4" stroke-width="1"/>
<path d="M11.5 1.2 L11.5 5.2 Q11.5 6.5 12.8 6.5 L17.3 6.5 Z" fill="#b8d2f6"/>
<path d="M5.40 9.50 L6.28 12.58 L9.08 11.02 L7.52 13.82 L10.60 14.70 L7.52 15.58 L9.08 18.38 L6.28 16.82 L5.40 19.90 L4.52 16.82 L1.72 18.38 L3.28 15.58 L0.20 14.70 L3.28 13.82 L1.72 11.02 L4.52 12.58 Z" fill="url(#gs)"/>
</svg>
<div class="t tb" style="left:78px;top:90px;width:40px;text-align:center;font-size:11px">New</div>

<svg class="a" style="left:131px;top:65px" width="22" height="22">
<defs><linearGradient id="gv" x1="0" y1="0" x2="0" y2="1"><stop offset="0" stop-color="#5b8ee0"/><stop offset="1" stop-color="#2f5fbf"/></linearGradient>
<linearGradient id="gv2" x1="0" y1="0" x2="0" y2="1"><stop offset="0" stop-color="#a4c0ee"/><stop offset="1" stop-color="#7aa2e4"/></linearGradient>
<linearGradient id="gv3" x1="0" y1="0" x2="1" y2="0"><stop offset="0" stop-color="#e8f0fc"/><stop offset="1" stop-color="#b8d0f4"/></linearGradient></defs>
<path d="M3.5 1.5 L18.5 1.5 Q20.5 1.5 20.5 3.5 L20.5 18.5 Q20.5 20.5 18.5 20.5 L4 20.5 L1.5 18 L1.5 3.5 Q1.5 1.5 3.5 1.5 Z" fill="url(#gv)" stroke="#2a52a4"/>
<rect x="4" y="4" width="14" height="7" fill="url(#gv2)"/>
<rect x="4" y="14" width="14" height="5" fill="url(#gv3)"/>
<rect x="5" y="15.2" width="2.8" height="2.8" fill="#2a52a4"/>
</svg>
<div class="t tb" style="left:122px;top:89px;width:40px;text-align:center;font-size:11px">Save</div>
<div class="dd" style="left:140px;top:104px;border-left-width:3px;border-right-width:3px;border-top:4px solid #111"></div>

<svg class="a" style="left:175px;top:65px" width="22" height="22">
<defs><linearGradient id="gx" x1="0" y1="0" x2="0" y2="1"><stop offset="0" stop-color="#d0e2fb"/><stop offset="1" stop-color="#8db4ee"/></linearGradient></defs>
<path d="M3.3 3.3 L18.7 18.7 M18.7 3.3 L3.3 18.7" stroke="#2c58a8" stroke-width="6.4" stroke-linecap="butt"/>
<path d="M3.9 3.9 L18.1 18.1 M18.1 3.9 L3.9 18.1" stroke="url(#gx)" stroke-width="4.4" stroke-linecap="butt"/>
</svg>
<div class="t tb" style="left:166px;top:89px;width:40px;text-align:center;font-size:11px">Delete</div>
<div class="dd" style="left:184px;top:104px;border-left-width:3px;border-right-width:3px;border-top:4px solid #111"></div>

<svg class="a" style="left:211px;top:64px" width="18" height="20">
<defs><linearGradient id="gc" x1="0" y1="0" x2="0.3" y2="1"><stop offset="0" stop-color="#5b8ee0"/><stop offset="1" stop-color="#2f5fbf"/></linearGradient></defs>
<path d="M3.5 18.5 L15.5 18.5 L15.5 5.5" fill="none" stroke="#2a52a4" stroke-width="1"/>
<path d="M2.5 17.3 L14.3 17.3 L14.3 4.5" fill="none" stroke="#8fb4ee" stroke-width="1.4"/>
<path d="M1.5 2.5 Q1.5 1.5 2.5 1.5 L9.5 1.5 L14 6 L14 15.5 Q14 16.5 13 16.5 L2.5 16.5 Q1.5 16.5 1.5 15.5 Z" fill="url(#gc)" stroke="#2a52a4"/>
<path d="M9.6 1.8 L9.6 6 L13.8 6 Z" fill="#b8d2f6"/>
<path d="M5 8 L10.5 13.5" stroke="#d8e6fa" stroke-width="1.7"/>
<path d="M7 13.8 L11 13.8 L11 9.8 Z" fill="#d8e6fa"/>
</svg>
<div class="t tb" style="left:231px;top:69px;font-size:11px">Create a Copy</div>

<svg class="a" style="left:210px;top:86px" width="20" height="19">
<defs><linearGradient id="gm" x1="0" y1="0" x2="0" y2="1"><stop offset="0" stop-color="#5b8ee0"/><stop offset="1" stop-color="#2f5fbf"/></linearGradient>
<radialGradient id="gms"><stop offset="0" stop-color="#ffffff"/><stop offset="1" stop-color="#a8c8f4"/></radialGradient></defs>
<path d="M5 14.5 Q1 14 1.3 9.5 Q1 6.5 3.5 5.3 Q4 1.8 8 1.5 Q10.5 0.3 13 1.8 Q17 2 17.2 5.5 Q19.3 7.5 18.5 10.5 Q18 14 14 14.3 Q11 15.5 8.5 14.5 L5.5 17.8 Z" fill="url(#gm)" stroke="#2a52a4" stroke-width="0.9" stroke-linejoin="round"/>
<path d="M10.20 2.80 L11.04 5.77 L13.74 4.26 L12.23 6.96 L15.20 7.80 L12.23 8.64 L13.74 11.34 L11.04 9.83 L10.20 12.80 L9.36 9.83 L6.66 11.34 L8.17 8.64 L5.20 7.80 L8.17 6.96 L6.66 4.26 L9.36 5.77 Z" fill="url(#gms)"/>
</svg>
<div class="t tb" style="left:231px;top:91px;font-size:11px">Memorize</div>

<svg class="a" style="left:320px;top:66px" width="22" height="19">
<defs><linearGradient id="gp" x1="0" y1="0" x2="0" y2="1"><stop offset="0" stop-color="#5b8ee0"/><stop offset="1" stop-color="#2f5fbf"/></linearGradient></defs><path d="M1.5 9 Q6 2 12 1.5 Q20.5 1 20.5 9 Q20.5 17.5 12 17.5 Q6 16 1.5 9 Z" fill="url(#gp)" stroke="#2a55a6"/>
<path d="M8 9 L11 12 L16 6" stroke="#b4d0f6" stroke-width="2" fill="none"/>
</svg>
<div class="t tb" style="left:300px;top:89px;width:60px;text-align:center;font-size:11px;line-height:13px">Mark As<br>Pending</div>
<div class="sep" style="left:361px;top:71px;height:45px"></div>

<svg class="a" style="left:381px;top:65px" width="23" height="22">
<rect x="3.5" y="1.5" width="15" height="12" fill="#fbf3d6" stroke="#9c8430"/>
<rect x="6" y="4" width="9" height="1.2" fill="#a88c38"/>
<rect x="6" y="6.5" width="5" height="1.2" fill="#a88c38"/>
<rect x="1" y="10" width="20.5" height="7" rx="1.5" fill="#a88a2e" stroke="#8a7224"/>
<rect x="3" y="11.5" width="2" height="1" fill="#f0e0a0"/>
<rect x="3" y="16" width="16.5" height="4.5" fill="#ecdca0" stroke="#8a7224"/>
</svg>
<div class="t tb" style="left:372px;top:89px;width:40px;text-align:center;font-size:11px">Print</div>
<div class="dd" style="left:389px;top:104px;border-left-width:3px;border-right-width:3px;border-top:4px solid #111"></div>

<svg class="a" style="left:425px;top:69px" width="21" height="14">
<rect x="1.5" y="1" width="18" height="12" rx="2" fill="#dcc66a" stroke="#9c8430"/>
<rect x="2" y="2" width="17" height="5" rx="1" fill="#eedc94"/>
<rect x="14.5" y="2.5" width="3" height="3" fill="#9c8430"/>
<rect x="7" y="6.5" width="6" height="1" fill="#9c8430"/>
<rect x="6" y="9" width="5" height="1" fill="#9c8430"/>
</svg>
<div class="t tb" style="left:416px;top:89px;width:40px;text-align:center;font-size:11px">Email</div>
<div class="dd" style="left:433px;top:104px;border-left-width:3px;border-right-width:3px;border-top:4px solid #111"></div>

<div class="a" style="left:461px;top:66px;width:13px;height:13px;border:1px solid #b4bedc;background:linear-gradient(135deg,#fafafc,#dfe2f2)"></div>
<div class="t tb" style="left:479px;top:67px;font-size:11px">Print Later</div>
<div class="a" style="left:461px;top:88px;width:13px;height:13px;border:1px solid #b4bedc;background:linear-gradient(135deg,#fafafc,#dfe2f2)"></div>
<div class="t tb" style="left:479px;top:89px;font-size:11px">Email Later</div>
<div class="sep" style="left:549px;top:71px;height:45px"></div>

<svg class="a" style="left:572px;top:65px" width="16" height="22">
<path d="M3.6 8 L3.6 15.5 Q3.6 19.6 8 19.6 Q12.4 19.6 12.4 15.5 L12.4 5.3 Q12.4 2.3 9.3 2.3 Q6.6 2.3 6.6 5.3 L6.6 14.8 Q6.6 16.3 8.1 16.3 Q9.5 16.3 9.5 14.8 L9.5 7.5" fill="none" stroke="#2f5cb0" stroke-width="3"/>
<path d="M3.6 8 L3.6 15.5 Q3.6 19.6 8 19.6 Q12.4 19.6 12.4 15.5 L12.4 5.3 Q12.4 2.3 9.3 2.3 Q6.6 2.3 6.6 5.3 L6.6 14.8 Q6.6 16.3 8.1 16.3 Q9.5 16.3 9.5 14.8 L9.5 7.5" fill="none" stroke="#9cc0f0" stroke-width="1.1"/>
</svg>
<div class="t tb" style="left:549px;top:89px;width:60px;text-align:center;font-size:11px;line-height:13px">Attach<br>File</div>
<div class="sep" style="left:607px;top:71px;height:45px"></div>

<svg class="a" style="left:619px;top:64px" width="20" height="20">
<defs><linearGradient id="gg1" x1="0" y1="0" x2="0" y2="1"><stop offset="0" stop-color="#6aa86a"/><stop offset="1" stop-color="#3f7f3f"/></linearGradient>
<radialGradient id="gg2" cx="0.4" cy="0.4"><stop offset="0" stop-color="#a8d8a0"/><stop offset="1" stop-color="#6aaa66"/></radialGradient></defs>
<rect x="1.5" y="1.5" width="12" height="15.5" rx="2" fill="url(#gg1)" stroke="#2f642f"/>
<rect x="2" y="2" width="11" height="2.5" fill="#7ab87a"/>
<path d="M3.5 6.5h2M7 6.5h3M3.5 8.5h2M7 8.5h2M3.5 10.5h2M7 10.5h1.5M3.5 12.5h2M7 12.5h1" stroke="#d8f0d0" stroke-width="1"/>
<circle cx="13.2" cy="13.7" r="4.8" fill="url(#gg2)" stroke="#2f642f"/>
<path d="M16.3 9.8 L17.8 8.3" stroke="#2f642f" stroke-width="1.6"/>
<path d="M13.2 10.5 L13.2 13.8" stroke="#3a7a3a" stroke-width="1.1"/>
</svg>
<div class="t tb" style="left:640px;top:69px;font-size:11px">Add Time/Costs</div>

<svg class="a" style="left:618px;top:88px" width="20" height="19">
<defs><linearGradient id="gg3" x1="0" y1="0" x2="0" y2="1"><stop offset="0" stop-color="#6aa86a"/><stop offset="1" stop-color="#3f7f3f"/></linearGradient>
<linearGradient id="gg4" x1="0" y1="0" x2="0" y2="1"><stop offset="0" stop-color="#a8d8a0"/><stop offset="1" stop-color="#70b06c"/></linearGradient></defs>
<rect x="1.3" y="1" width="16.3" height="10" rx="2" fill="url(#gg3)" stroke="#2f642f"/>
<ellipse cx="8.5" cy="5.5" rx="2.8" ry="3.2" fill="#88c088" opacity=".8"/>
<path d="M11.5 8 L15.5 8 L15.5 11.5 L19 11.5 L19 15.5 L15.5 15.5 L15.5 19 L11.5 19 L11.5 15.5 L8 15.5 L8 11.5 L11.5 11.5 Z" transform="translate(-0.2,-1.3)" fill="url(#gg4)" stroke="#2f642f" stroke-width="1" stroke-linejoin="round"/>
</svg>
<div class="t tb" style="left:640px;top:91px;font-size:11px">Apply Credits</div>
<div class="sep" style="left:727px;top:71px;height:45px"></div>

<svg class="a" style="left:753px;top:67px" width="22" height="18">
<defs><linearGradient id="gr1" x1="0" y1="0" x2="0" y2="1"><stop offset="0" stop-color="#6aa86a"/><stop offset="1" stop-color="#3f7f3f"/></linearGradient><linearGradient id="gr2" x1="0" y1="0" x2="1" y2="1"><stop offset="0" stop-color="#98cc90"/><stop offset="1" stop-color="#4a8a4a"/></linearGradient></defs>
<rect x="1.3" y="1.3" width="17.5" height="10.5" rx="1.5" fill="url(#gr1)" stroke="#2f642f"/>
<ellipse cx="9" cy="6.3" rx="2.6" ry="3.3" fill="#8cc48a" opacity=".75"/>
<circle cx="4" cy="8.5" r="0.9" fill="#8cc48a"/><circle cx="15" cy="3.8" r="0.9" fill="#a0d098"/>
<path d="M13.5 9 h6.5 v2 h-6.5z M13.5 11 h6.5 v2 h-6.5z M13.5 13 h6.5 v2 h-6.5z M13.5 15 h6.5 v2 h-6.5z" fill="#7ab878" stroke="#2f642f" stroke-width="0.6"/>
<ellipse cx="11.5" cy="13.5" rx="4" ry="3" transform="rotate(-25 11.5 13.5)" fill="url(#gr2)" stroke="#2f642f" stroke-width="0.8"/>
</svg>
<div class="t tb" style="left:733px;top:89px;width:60px;text-align:center;font-size:11px;line-height:13px">Receive<br>Payments</div>

<svg class="a" style="left:797px;top:64px" width="18" height="19">
<defs><linearGradient id="gb1" x1="0" y1="0" x2="0" y2="1"><stop offset="0" stop-color="#6aa86a"/><stop offset="1" stop-color="#3f7f3f"/></linearGradient></defs>
<path d="M14.5 4 L14.5 17.5 L4 17.5" fill="none" stroke="#2f642f" stroke-width="1"/>
<path d="M13 3 L13 16.3 L3 16.3" fill="none" stroke="#5a9a5a" stroke-width="1.2"/>
<path d="M15.6 5 L15.6 18.3 L5 18.3" fill="none" stroke="#4a8a4a" stroke-width="0.9"/>
<path d="M1.5 2.5 Q1.5 1.5 2.5 1.5 L8 1.5 L11.5 5 L11.5 14.5 Q11.5 15.5 10.5 15.5 L2.5 15.5 Q1.5 15.5 1.5 14.5 Z" fill="url(#gb1)" stroke="#2f642f"/>
<rect x="2.5" y="3" width="2.5" height="1" fill="#2f642f"/>
<rect x="3.3" y="6.5" width="6" height="4.5" fill="#9ad094" stroke="#2f642f" stroke-width="0.6"/>
<path d="M3.3 8.2 h6 M3.3 9.7 h6" stroke="#2f642f" stroke-width="0.5"/>
<rect x="6" y="12" width="3" height="1" fill="#9ad094"/>
</svg>
<div class="t tb" style="left:816px;top:69px;font-size:11px">Create a Batch</div>

<svg class="a" style="left:795px;top:88px" width="20" height="18">
<defs><linearGradient id="gf1" x1="0" y1="0" x2="0" y2="1"><stop offset="0" stop-color="#6aa86a"/><stop offset="1" stop-color="#3f7f3f"/></linearGradient><linearGradient id="gf2" x1="0" y1="0" x2="0" y2="1"><stop offset="0" stop-color="#a8d8a0"/><stop offset="1" stop-color="#5e9e5c"/></linearGradient></defs>
<rect x="1.3" y="1.3" width="16.5" height="10" rx="1.5" fill="url(#gf1)" stroke="#2f642f"/>
<ellipse cx="9.5" cy="6.3" rx="2.6" ry="3.3" fill="#8cc48a" opacity=".75"/>
<circle cx="4" cy="8.5" r="0.9" fill="#8cc48a"/><circle cx="15" cy="3.8" r="0.9" fill="#a0d098"/>
<path d="M5.5 10.5 Q7.5 15.5 13 14 L12.5 16.8 L17.8 12 L14.5 8.3 L13.7 11 Q10 12.5 8.5 10.5 Z" fill="url(#gf2)" stroke="#2f642f" stroke-width="0.9" stroke-linejoin="round"/>
</svg>
<div class="t tb" style="left:816px;top:91px;font-size:11px">Refund/Credit</div>
<div class="sep" style="left:899px;top:71px;height:45px"></div>

<!-- tab bar right icons -->
<svg class="a" style="left:1105px;top:40px" width="14" height="13">
<path d="M1.8 5.2 L1.8 1.8 L5.2 1.8 M1.8 1.8 L5.5 5.5 M12.2 5.2 L12.2 1.8 L8.8 1.8 M12.2 1.8 L8.5 5.5 M1.8 7.8 L1.8 11.2 L5.2 11.2 M1.8 11.2 L5.5 7.5 M12.2 7.8 L12.2 11.2 L8.8 11.2 M12.2 11.2 L8.5 7.5" stroke="#333" stroke-width="1.7" fill="none"/>
</svg>
<svg class="a" style="left:1130px;top:42px" width="14" height="10"><path d="M1.5 8 L7 2.5 L12.5 8" stroke="#333" stroke-width="2.2" fill="none"/></svg>

<!-- customer bar dropdown arrows -->
<div class="dd" style="left:319px;top:146px"></div>
<div class="dd" style="left:606px;top:147px"></div>
<div class="dd" style="left:862px;top:147px"></div>
</body></html>
